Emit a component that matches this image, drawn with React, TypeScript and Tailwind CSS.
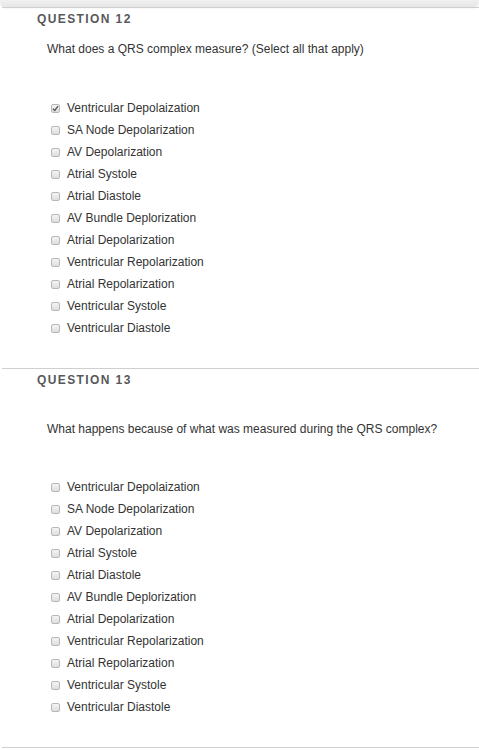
import React from 'react';

const options = [
  'Ventricular Depolaization',
  'SA Node Depolarization',
  'AV Depolarization',
  'Atrial Systole',
  'Atrial Diastole',
  'AV Bundle Deplorization',
  'Atrial Depolarization',
  'Ventricular Repolarization',
  'Atrial Repolarization',
  'Ventricular Systole',
  'Ventricular Diastole',
];

const Box = ({ checked }: { checked: boolean }) => (
  <span className="w-[9px] h-[9px] rounded-[2px] border border-[#b8b8b8] bg-gradient-to-b from-[#f4f4f4] to-[#dedede] flex items-center justify-center shrink-0">
    {checked && (
      <svg width="7" height="7" viewBox="0 0 7 7">
        <path d="M1 3.8 L2.8 5.5 L6 1.2" stroke="#555" strokeWidth="1.3" fill="none" />
      </svg>
    )}
  </span>
);

const Question = ({ num, text, checked, labelGap, textGap }: { num: number; text: string; checked: number[]; labelGap: string; textGap: string }) => (
  <div className="border-t border-[#cfcfcf] ml-[2px]">
    <div className="pl-[35px] pt-[2px] h-[20px] text-[12px] font-bold tracking-[1.4px] text-[#58585a]">QUESTION {num}</div>
    <div className={`pl-[45px] ${labelGap} text-[12px] text-[#333] h-[18px] leading-[18px]`}>{text}</div>
    <div className={`${textGap} pl-[49px] flex flex-col`}>
      {options.map((o, i) => (
        <div key={o} className="h-[22px] flex items-center gap-[7px]">
          <Box checked={checked.includes(i)} />
          <span className="text-[12px] text-[#333] leading-[22px]">{o}</span>
        </div>
      ))}
    </div>
  </div>
);

export default function App() {
  return (
    <div className="w-[479px] h-[750px] bg-white overflow-hidden" style={{ fontFamily: '"Liberation Sans", Arial, sans-serif' }}>
      <div className="h-[7px] rounded-b-[6px] bg-gradient-to-b from-[#f0f0f0] to-[#e6e6e6] shadow-[0_1px_2px_rgba(0,0,0,0.1)]" />
      <Question num={12} text="What does a QRS complex measure? (Select all that apply)" checked={[0]} labelGap="mt-[12px]" textGap="mt-[39px]" />
      <div className="h-[29px]" />
      <Question num={13} text="What happens because of what was measured during the QRS complex?" checked={[]} labelGap="mt-[31px]" textGap="mt-[38px]" />
      <div className="mt-[29px] border-t border-[#cfcfcf] ml-[2px]" />
    </div>
  );
}
